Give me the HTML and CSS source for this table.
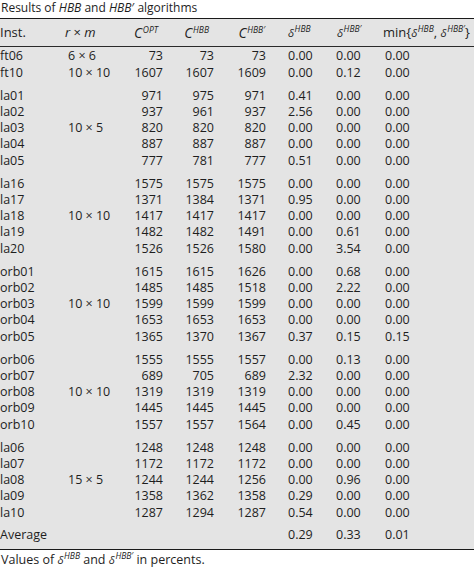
FILE: index.html
```html
<!DOCTYPE html>
<html lang="en">
<head>
<meta charset="utf-8">
<title>Results of HBB and HBB′ algorithms</title>
<link rel="stylesheet" href="styles.css">
</head>
<body>
<div class="title">Results of <i>HBB</i> and <i>HBB</i>′ algorithms</div>
<table class="results">
  <colgroup>
    <col class="c1"><col class="c2"><col class="c3"><col class="c4"><col class="c5"><col class="c6"><col class="c7"><col class="c8">
  </colgroup>
  <thead>
    <tr>
      <th class="h1">Inst.</th>
      <th class="h2"><i>r</i> × <i>m</i></th>
      <th class="h3"><i>C</i><sup>OPT</sup></th>
      <th class="h4"><i>C</i><sup>HBB</sup></th>
      <th class="h5"><i>C</i><sup>HBB′</sup></th>
      <th class="h6"><span class="d">δ</span><sup>HBB</sup></th>
      <th class="h7"><span class="d">δ</span><sup>HBB′</sup></th>
      <th class="h8">min{<span class="d">δ</span><sup>HBB</sup>, <span class="d">δ</span><sup>HBB′</sup>}</th>
    </tr>
  </thead>
  <tbody>
    <tr class="first"><td>ft06</td><td>6 × 6</td><td>73</td><td>73</td><td>73</td><td>0.00</td><td>0.00</td><td>0.00</td></tr>
    <tr><td>ft10</td><td>10 × 10</td><td>1607</td><td>1607</td><td>1609</td><td>0.00</td><td>0.12</td><td>0.00</td></tr>

    <tr class="g"><td>la01</td><td></td><td>971</td><td>975</td><td>971</td><td>0.41</td><td>0.00</td><td>0.00</td></tr>
    <tr><td>la02</td><td></td><td>937</td><td>961</td><td>937</td><td>2.56</td><td>0.00</td><td>0.00</td></tr>
    <tr><td>la03</td><td>10 × 5</td><td>820</td><td>820</td><td>820</td><td>0.00</td><td>0.00</td><td>0.00</td></tr>
    <tr><td>la04</td><td></td><td>887</td><td>887</td><td>887</td><td>0.00</td><td>0.00</td><td>0.00</td></tr>
    <tr><td>la05</td><td></td><td>777</td><td>781</td><td>777</td><td>0.51</td><td>0.00</td><td>0.00</td></tr>

    <tr class="g"><td>la16</td><td></td><td>1575</td><td>1575</td><td>1575</td><td>0.00</td><td>0.00</td><td>0.00</td></tr>
    <tr><td>la17</td><td></td><td>1371</td><td>1384</td><td>1371</td><td>0.95</td><td>0.00</td><td>0.00</td></tr>
    <tr><td>la18</td><td>10 × 10</td><td>1417</td><td>1417</td><td>1417</td><td>0.00</td><td>0.00</td><td>0.00</td></tr>
    <tr><td>la19</td><td></td><td>1482</td><td>1482</td><td>1491</td><td>0.00</td><td>0.61</td><td>0.00</td></tr>
    <tr><td>la20</td><td></td><td>1526</td><td>1526</td><td>1580</td><td>0.00</td><td>3.54</td><td>0.00</td></tr>

    <tr class="g"><td>orb01</td><td></td><td>1615</td><td>1615</td><td>1626</td><td>0.00</td><td>0.68</td><td>0.00</td></tr>
    <tr><td>orb02</td><td></td><td>1485</td><td>1485</td><td>1518</td><td>0.00</td><td>2.22</td><td>0.00</td></tr>
    <tr><td>orb03</td><td>10 × 10</td><td>1599</td><td>1599</td><td>1599</td><td>0.00</td><td>0.00</td><td>0.00</td></tr>
    <tr><td>orb04</td><td></td><td>1653</td><td>1653</td><td>1653</td><td>0.00</td><td>0.00</td><td>0.00</td></tr>
    <tr><td>orb05</td><td></td><td>1365</td><td>1370</td><td>1367</td><td>0.37</td><td>0.15</td><td>0.15</td></tr>

    <tr class="g"><td>orb06</td><td></td><td>1555</td><td>1555</td><td>1557</td><td>0.00</td><td>0.13</td><td>0.00</td></tr>
    <tr><td>orb07</td><td></td><td>689</td><td>705</td><td>689</td><td>2.32</td><td>0.00</td><td>0.00</td></tr>
    <tr><td>orb08</td><td>10 × 10</td><td>1319</td><td>1319</td><td>1319</td><td>0.00</td><td>0.00</td><td>0.00</td></tr>
    <tr><td>orb09</td><td></td><td>1445</td><td>1445</td><td>1445</td><td>0.00</td><td>0.00</td><td>0.00</td></tr>
    <tr><td>orb10</td><td></td><td>1557</td><td>1557</td><td>1564</td><td>0.00</td><td>0.45</td><td>0.00</td></tr>

    <tr class="g"><td>la06</td><td></td><td>1248</td><td>1248</td><td>1248</td><td>0.00</td><td>0.00</td><td>0.00</td></tr>
    <tr><td>la07</td><td></td><td>1172</td><td>1172</td><td>1172</td><td>0.00</td><td>0.00</td><td>0.00</td></tr>
    <tr><td>la08</td><td>15 × 5</td><td>1244</td><td>1244</td><td>1256</td><td>0.00</td><td>0.96</td><td>0.00</td></tr>
    <tr><td>la09</td><td></td><td>1358</td><td>1362</td><td>1358</td><td>0.29</td><td>0.00</td><td>0.00</td></tr>
    <tr><td>la10</td><td></td><td>1287</td><td>1294</td><td>1287</td><td>0.54</td><td>0.00</td><td>0.00</td></tr>

    <tr class="avg"><td class="lbl" colspan="5">Average</td><td class="a1">0.29</td><td class="a2">0.33</td><td class="a3">0.01</td></tr>
  </tbody>
</table>
<div class="note">Values of <span class="d">δ</span><sup>HBB</sup> and <span class="d">δ</span><sup>HBB′</sup> in percents.</div>
</body>
</html>
```

FILE: styles.css
```css
html, body {
  margin: 0;
  padding: 0;
  background: #ffffff;
}

body {
  width: 474px;
  font-family: "Open Sans", "Liberation Sans", sans-serif;
  font-size: 12.5px;
  color: #1e1e1e;
  overflow: hidden;
}

.title {
  height: 17.5px;
  line-height: 16px;
  font-size: 12px;
  padding-left: 1px;
}

.title i {
  font-style: italic;
}

sup {
  font-size: 8.5px;
  font-style: italic;
  line-height: 0;
  vertical-align: 5px;
  margin-left: 0.5px;
}

.d {
  font-style: italic;
  font-size: 11px;
}

.results {
  width: 474px;
  table-layout: fixed;
  border-collapse: collapse;
  border-spacing: 0;
  background: #e4e4e4;
  border-top: 1.5px solid #1a1a1a;
  border-bottom: 1.5px solid #1a1a1a;
}

.c1 { width: 62px; }
.c2 { width: 58px; }
.c3 { width: 43px; }
.c4 { width: 51px; }
.c5 { width: 52px; }
.c6 { width: 70px; }
.c7 { width: 49px; }
.c8 { width: 89px; }

.results th {
  font-weight: normal;
  font-size: 13px;
  height: 27px;
  padding: 0;
  text-align: left;
  vertical-align: middle;
  border-bottom: 1px solid #2a2a2a;
  white-space: nowrap;
}

.results th i {
  font-style: italic;
}

.results th.h2 { padding-left: 3px; }
.results th.h3 { text-align: right; padding-right: 5px; }
.results th.h4 { text-align: right; padding-right: 5px; }
.results th.h5 { text-align: right; padding-right: 1px; }
.results th.h6 { padding-left: 22px; }
.results th.h7 { padding-left: 1px; }
.results th.h8 { padding-left: 0; text-indent: -2px; }

.results th.h3 i,
.results th.h4 i,
.results th.h5 i {
  font-size: 14px;
}

.results td {
  padding: 0;
  line-height: 16.25px;
  white-space: nowrap;
  vertical-align: bottom;
}

.results td:nth-child(2) { padding-left: 6px; }
.results td:nth-child(3),
.results td:nth-child(4),
.results td:nth-child(5) { text-align: right; padding-right: 0; }
.results td:nth-child(6) { padding-left: 22px; }
.results td:nth-child(7) { padding-left: 0; }
.results td:nth-child(8) { padding-left: 0; }

.results tr.first td { padding-top: 1.75px; }
.results tr.g td { padding-top: 6.75px; }

.results tr.avg td {
  padding-top: 6px;
  padding-bottom: 6px;
  text-align: left;
}
.results tr.avg td.lbl { padding-left: 0; }
.results tr.avg td.a1 { padding-left: 22px; }
.results tr.avg td.a2 { padding-left: 0; }
.results tr.avg td.a3 { padding-left: 0; }

.note {
  line-height: 15px;
  padding-top: 2px;
  padding-left: 1px;
}
```
